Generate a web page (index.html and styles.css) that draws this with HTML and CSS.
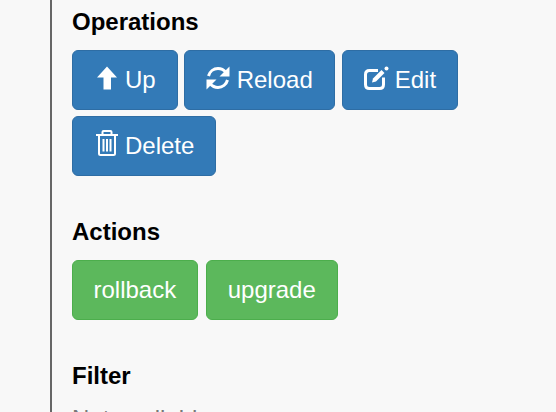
FILE: index.html
```html
<!doctype html>
<html lang="en">
<head>
	<meta charset="UTF-8">
	<title>Operations</title>
	<link rel="stylesheet" href="styles.css">
</head>
<body>
	<div class="panel">
		<h3 class="title">Operations</h3>
		<div class="btns">
			<a class="btn blue">
				<svg class="icon" width="24" height="24" viewBox="0 0 24 24"><path d="M13 0.500L23 11.500H17V23.500H9.500V11.500H3Z" fill="#fff"/></svg>Up</a>
			<a class="btn blue reload">
				<svg class="icon" width="24" height="24" viewBox="0 0 24 24" fill="none" stroke="#fff" stroke-width="3"><path d="M2.500 10C3.700 5.500 7.500 2.500 12 2.500C15.200 2.500 17.800 3.800 19.800 6.200"/><path d="M23.500 0.500V10.500H13.500Z" fill="#fff" stroke="none"/><path d="M21.500 14C20.300 18.500 16.500 21.500 12 21.500C8.800 21.500 6.200 20.200 4.200 17.800"/><path d="M0.500 23.500V13.500H10.500Z" fill="#fff" stroke="none"/></svg>Reload</a>
			<a class="btn blue">
				<svg class="icon" width="24" height="24" viewBox="0 0 24 24" fill="none" stroke="#fff"><path d="M14 4.500H5.500Q1.500 4.500 1.500 8.500V18.500Q1.500 22.500 5.500 22.500H15.500Q19.500 22.500 19.500 18.500V11.500" stroke-width="3"/><path d="M8 16.500L9 12.500L17.500 4L20.500 7L12 15.500Z" fill="#fff" stroke="none"/><circle cx="22.500" cy="2.500" r="2" fill="#fff" stroke="none"/></svg>Edit</a>
			<a class="btn blue trash">
				<svg class="icon" width="24" height="26" viewBox="0 0 24 26" fill="none" stroke="#fff" stroke-width="2"><path d="M2 5H24"/><path d="M8.500 5V2Q8.500 1 9.500 1H16.500Q17.500 1 17.500 2V5"/><path d="M5 5V23.500Q5 25 6.500 25H19.500Q21 25 21 23.500V5"/><path d="M9.500 9V21.500M13 9V21.500M16.500 9V21.500"/></svg>Delete</a>
		</div>
		<h3 class="title actions">Actions</h3>
		<div class="btns">
			<a class="btn green rollback">rollback</a>
			<a class="btn green">upgrade</a>
		</div>
		<h3 class="title filter">Filter</h3>
		<p class="none">Not available</p>
	</div>
</body>
</html>
```

FILE: styles.css
```css
html, body {
	margin: 0;
	padding: 0;
	height: 412px;
	overflow: hidden;
	background-color: #f8f8f8;
	font-family: "Liberation Sans", Arial, sans-serif;
}
.panel {
	margin-left: 50px;
	padding: 9px 0 0 20px;
	border-left: 2px solid #666;
	height: 403px;
}
.title {
	margin: 0 0 15px;
	font-size: 24px;
	line-height: 26px;
	font-weight: bold;
	color: #000;
}
.actions {
	margin: 43px 0 15px;
}
.filter {
	margin: 43px 0 17px;
}
.btns {
	display: flex;
	flex-wrap: wrap;
	gap: 6px;
	width: 400px;
}
.btn {
	display: flex;
	align-items: center;
	justify-content: center;
	box-sizing: border-box;
	height: 60px;
	padding: 0 21px;
	border: 1px solid;
	border-radius: 6px;
	font-size: 24px;
	color: #fff;
}
.blue {
	background-color: #337ab7;
	border-color: #2e6da4;
}
.green {
	background-color: #5cb85c;
	border-color: #4cae4c;
}
.reload {
	margin-right: 1px;
}
.rollback {
	margin-right: 2px;
	padding: 0 20.5px;
}
.icon {
	margin: 0 7px 4px 0;
	overflow: visible;
}
.trash .icon {
	margin-bottom: 6px;
}
.none {
	margin: 0;
	font-size: 24px;
	line-height: 26px;
	color: #777;
}
```
